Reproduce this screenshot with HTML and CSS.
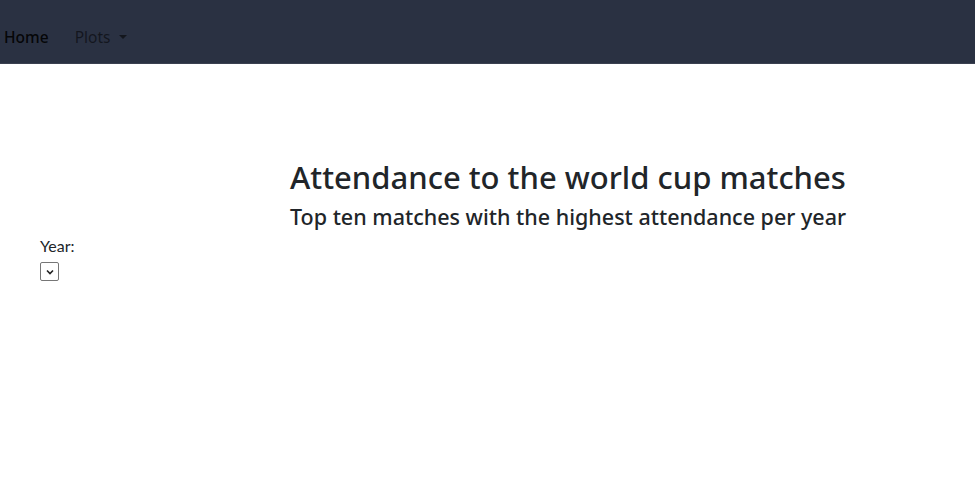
FILE: index.html
```html
<!DOCTYPE html>
<html>
<head>
<meta charset="utf-8">
<link rel="stylesheet" href="styles.css">
</head>
<body>
<nav class="navbar">
  <a class="nav-link active" href="#">Home</a>
  <a class="nav-link dropdown" href="#">Plots <span class="caret"></span></a>
</nav>
<main class="content">
  <aside class="sidebar">
    <label class="label">Year:</label>
    <div class="select"><svg width="8" height="6" viewBox="0 0 8 6"><path d="M1 1.5 L4 4.5 L7 1.5" fill="none" stroke="#222" stroke-width="1.6"/></svg></div>
  </aside>
  <section class="titles">
    <h1 class="title">Attendance to the world cup matches</h1>
    <h2 class="subtitle">Top ten matches with the highest attendance per year</h2>
  </section>
</main>
</body>
</html>
```
FILE: styles.css
```css
html, body { margin: 0; padding: 0; background: #fff; }
body { font-family: "Noto Sans", "Open Sans", sans-serif; color: #212529; }
.navbar {
  height: 64px;
  background: #2a3142;
  display: flex;
  align-items: center;
  padding: 0 4px;
  gap: 26px;
  box-sizing: border-box;
  border-bottom: 1px solid #3a4050;
}
.nav-link {
  text-decoration: none;
  font-size: 15.5px;
  color: rgba(0,0,0,0.55);
  padding-top: 10px;
  display: flex;
  align-items: center;
}
.nav-link.active { color: rgba(0,0,0,0.9); font-weight: 500; }
.caret {
  display: inline-block;
  margin-left: 9px;
  width: 0; height: 0;
  border-left: 4px solid transparent;
  border-right: 4px solid transparent;
  border-top: 4px solid rgba(0,0,0,0.55);
}
.content {
  display: flex;
  padding: 0 0 0 40px;
}
.sidebar {
  width: 250px;
  padding-top: 172px;
}
.label { display: block; font-family: "Lato", sans-serif; font-size: 16px; color: #212529; line-height: 20px; }
.select {
  margin-top: 6px;
  width: 19px; height: 19px;
  border: 1px solid #767676;
  border-radius: 2px;
  display: flex; align-items: center; justify-content: center;
  box-sizing: border-box;
}
.titles { padding-top: 94px; }
.title { margin: 0; font-size: 31px; font-weight: 500; line-height: 38px; }
.subtitle { margin: 6px 0 0; font-size: 21.5px; font-weight: 500; line-height: 30px; }
```
